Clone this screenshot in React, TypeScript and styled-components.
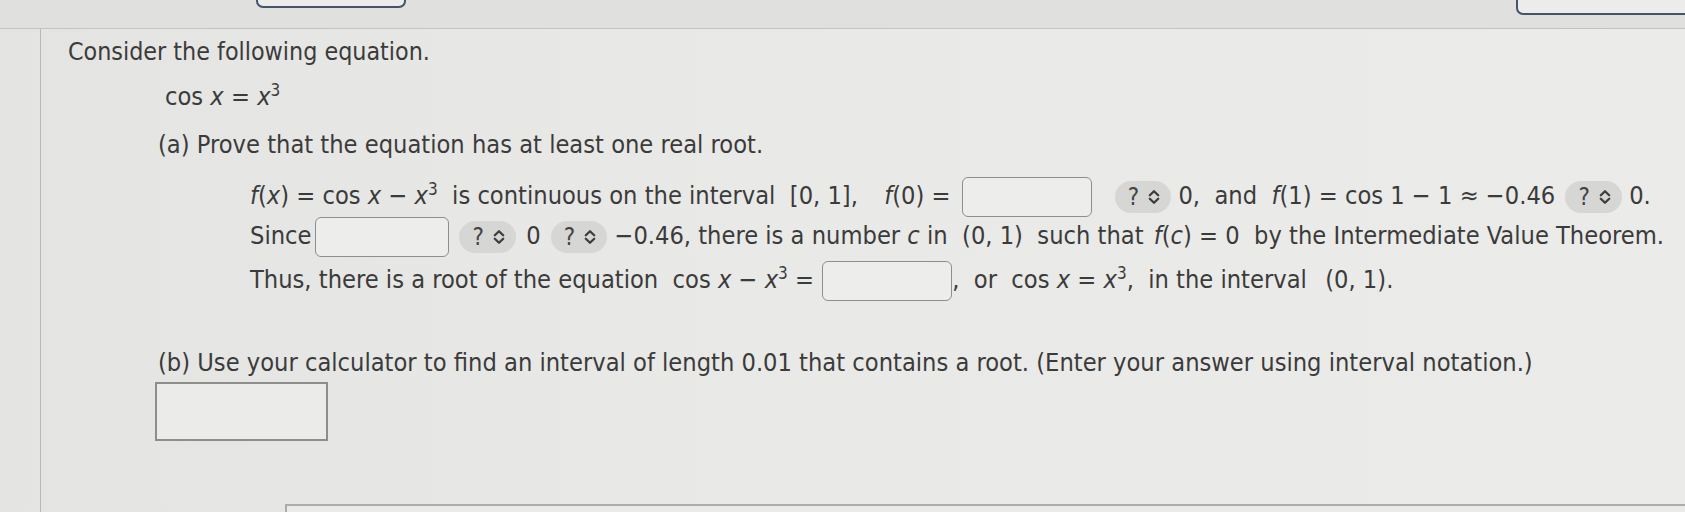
import React from "react";
import styled, { createGlobalStyle } from "styled-components";

const GlobalStyle = createGlobalStyle`
  html, body { margin: 0; padding: 0; }
  body {
    background: #e7e7e5;
    font-family: "DejaVu Sans Condensed", "DejaVu Sans", sans-serif;
    font-stretch: condensed;
    color: #3b3b3b;
  }
`;

const Page = styled.div`
  width: 1685px;
  height: 512px;
  overflow: hidden;
  display: flex;
  flex-direction: column;
  background: linear-gradient(90deg, #e4e4e2 0%, #e9e9e7 45%, #ebebe9 100%);
`;

const TopBar = styled.div`
  flex: none;
  height: 29px;
  box-sizing: border-box;
  display: flex;
  justify-content: space-between;
  align-items: flex-start;
  padding-left: 256px;
  background: #e0e0de;
  border-bottom: 1.5px solid #c3c3c1;
`;

const TopTab = styled.div<{ $w: number; $h: number; $mr?: number }>`
  width: ${(p) => p.$w}px;
  height: ${(p) => p.$h}px;
  margin-top: -22px;
  margin-right: ${(p) => p.$mr ?? 0}px;
  box-sizing: border-box;
  border: 2px solid #44556b;
  border-radius: 7px;
  background: #ececea;
`;

const Body = styled.div`
  flex: 1;
  display: flex;
`;

const Gutter = styled.div`
  flex: none;
  width: 40px;
  border-right: 1.5px solid #b9b9b7;
`;

const Content = styled.div`
  flex: 1;
  display: flex;
  flex-direction: column;
`;

const Row = styled.div<{ $indent: number; $mt: number }>`
  flex: none;
  height: 40px;
  line-height: 40px;
  margin-top: ${(p) => p.$mt}px;
  padding-left: ${(p) => p.$indent}px;
  font-size: 25.2px;
  white-space: pre;
`;

const Title = styled(Row)`
  font-size: 24.8px;
`;

const I = styled.span`
  font-style: italic;
`;

const Sup = styled.span`
  font-size: 17px;
  vertical-align: 9px;
  line-height: 0;
`;

const Gap = styled.span<{ $w: number }>`
  display: inline-block;
  width: ${(p) => p.$w}px;
`;

const InputBox = styled.span<{ $w: number }>`
  display: inline-block;
  vertical-align: middle;
  width: ${(p) => p.$w}px;
  height: 40px;
  box-sizing: border-box;
  border: 1.5px solid #8e8e8c;
  border-radius: 6px;
  background: #ededeb;
`;

const Pill = styled.span`
  display: inline-flex;
  vertical-align: middle;
  align-items: center;
  gap: 9px;
  height: 32px;
  line-height: 32px;
  padding: 0 11px 0 13px;
  box-sizing: border-box;
  border-radius: 16px;
  background: #d6d6d4;
  font-size: 24px;
  color: #444;
`;

const AnswerBox = styled.div`
  flex: none;
  width: 173px;
  height: 59px;
  margin-top: -1px;
  margin-left: 114px;
  box-sizing: border-box;
  border: 2px solid #8d8d8b;
  background: #ebebe9;
`;

const BottomPanel = styled.div`
  flex: none;
  height: 30px;
  margin-top: 63px;
  margin-left: 244px;
  box-sizing: border-box;
  border-top: 2px solid #acacaa;
  border-left: 2px solid #acacaa;
  background: #ebebe9;
`;

const Chevrons = () => (
  <svg width="12" height="16" viewBox="0 0 12 16">
    <path
      d="M1.8 6.3 L6 2.2 L10.2 6.3 M1.8 9.7 L6 13.8 L10.2 9.7"
      stroke="#3e3e3e"
      strokeWidth="2.3"
      fill="none"
      strokeLinecap="round"
      strokeLinejoin="round"
    />
  </svg>
);

const Select = () => (
  <Pill>
    ?<Chevrons />
  </Pill>
);

export default function App() {
  return (
    <>
      <GlobalStyle />
      <Page>
        <TopBar>
          <TopTab $w={150} $h={30} />
          <TopTab $w={209} $h={37} $mr={-40} />
        </TopBar>
        <Body>
          <Gutter />
          <Content>
            <Title $indent={27} $mt={3}>Consider the following equation.</Title>
            <Row $indent={124} $mt={5}>
              cos <I>x</I> = <I>x</I>
              <Sup>3</Sup>
            </Row>
            <Row $indent={117} $mt={8}>(a) Prove that the equation has at least one real root.</Row>
            <Row $indent={209} $mt={11}>
              <I>f</I>(<I>x</I>) = cos <I>x</I> − <I>x</I>
              <Sup>3</Sup>
              {"  is continuous on the interval  [0, 1],  "}
              <Gap $w={12} />
              <I>f</I>(0) = <Gap $w={4} />
              <InputBox $w={130} />
              <Gap $w={23} />
              <Select />
              {" 0,  and  "}
              <I>f</I>(1) = cos 1 − 1 ≈ −0.46 <Gap $w={3} />
              <Select />
              {" 0."}
            </Row>
            <Row $indent={209} $mt={0}>
              Since
              <Gap $w={4} />
              <InputBox $w={134} />
              <Gap $w={10} />
              <Select />
              <Gap $w={3} />
              {" 0 "}
              <Gap $w={3} />
              <Select />
              {" −0.46, there is a number "}
              <I>c</I>
              {" in  (0, 1)  such that "}
              <Gap $w={3} />
              <I>f</I>(<I>c</I>) = 0{"  by the Intermediate Value Theorem."}
            </Row>
            <Row $indent={209} $mt={4}>
              {"Thus, there is a root of the equation  cos "}
              <I>x</I> − <I>x</I>
              <Sup>3</Sup> = <Gap $w={1} />
              <InputBox $w={130} />
              {",  or  cos "}
              <I>x</I> = <I>x</I>
              <Sup>3</Sup>
              {",  in the interval "}
              <Gap $w={4} />
              {" (0, 1)."}
            </Row>
            <Row $indent={117} $mt={43}>
              (b) Use your calculator to find an interval of length 0.01 that contains a root. (Enter your answer using interval notation.)
            </Row>
            <AnswerBox />
            <BottomPanel />
          </Content>
        </Body>
      </Page>
    </>
  );
}
